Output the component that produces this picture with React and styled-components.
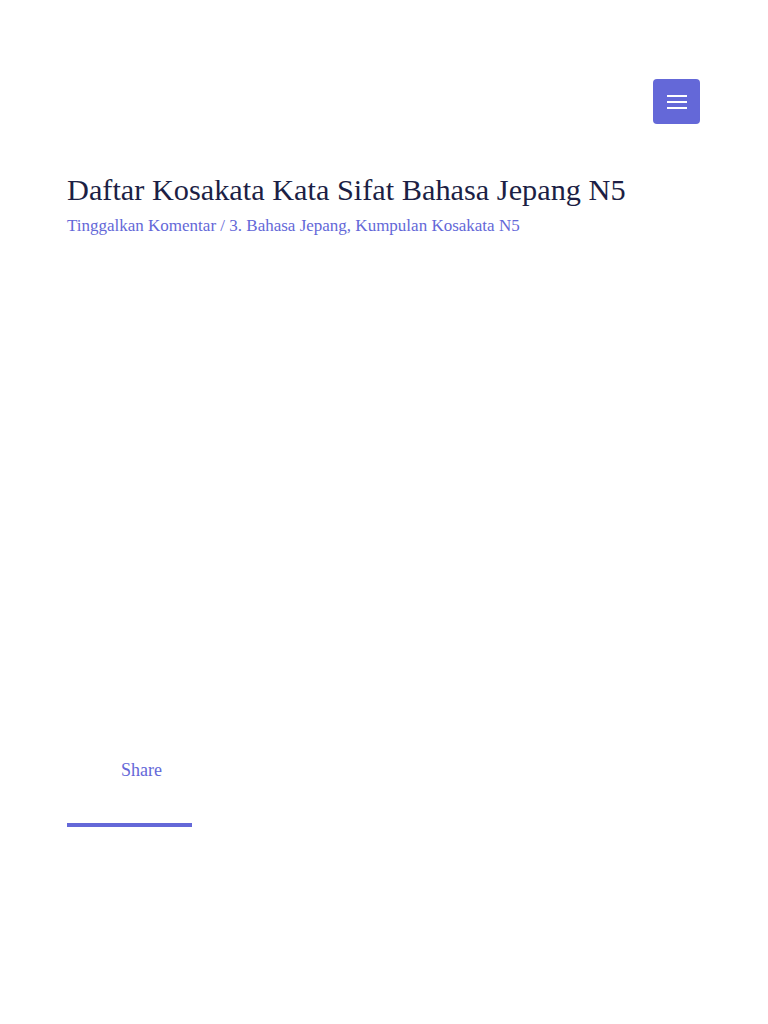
import React from "react";
import styled, { createGlobalStyle } from "styled-components";

const Global = createGlobalStyle`
  html, body {
    margin: 0;
    padding: 0;
    background: #ffffff;
  }
  body {
    font-family: "Liberation Serif", "DejaVu Serif", serif;
  }
`;

const accent = "#6468d8";

const Page = styled.div`
  width: 768px;
  min-height: 1024px;
  padding: 0 67px;
  box-sizing: border-box;
`;

const Header = styled.header`
  display: flex;
  justify-content: flex-end;
  padding: 79px 1px 0 0;
`;

const MenuButton = styled.button`
  width: 47px;
  height: 45px;
  border: none;
  border-radius: 4px;
  background: ${accent};
  display: flex;
  flex-direction: column;
  align-items: center;
  justify-content: center;
  gap: 4px;
  padding: 0;
  cursor: pointer;
`;

const Bar = styled.span`
  display: block;
  width: 20px;
  height: 2px;
  background: #ffffff;
`;

const Article = styled.article`
  padding-top: 48px;
`;

const Title = styled.h1`
  margin: 0;
  font-size: 30.3px;
  font-weight: 400;
  line-height: 36px;
  color: #1c1f45;
`;

const Meta = styled.div`
  margin-top: 8px;
  font-size: 17px;
  color: ${accent};
`;

const MetaLink = styled.a`
  color: inherit;
  text-decoration: none;
`;

const Content = styled.div`
  height: 524px;
`;

const ShareBox = styled.div`
  width: 125px;
`;

const ShareLabel = styled.div`
  padding: 0 0 42px 54px;
  font-size: 18px;
  color: ${accent};
`;

const ShareLine = styled.div`
  height: 4px;
  background: ${accent};
`;

export default function App() {
  return (
    <>
      <Global />
      <Page>
        <Header>
          <MenuButton aria-label="Menu">
            <Bar />
            <Bar />
            <Bar />
          </MenuButton>
        </Header>
        <Article>
          <Title>Daftar Kosakata Kata Sifat Bahasa Jepang N5</Title>
          <Meta>
            <MetaLink href="#">Tinggalkan Komentar</MetaLink> /{" "}
            <MetaLink href="#">3. Bahasa Jepang</MetaLink>,{" "}
            <MetaLink href="#">Kumpulan Kosakata N5</MetaLink>
          </Meta>
          <Content />
          <ShareBox>
            <ShareLabel>Share</ShareLabel>
            <ShareLine />
          </ShareBox>
        </Article>
      </Page>
    </>
  );
}
